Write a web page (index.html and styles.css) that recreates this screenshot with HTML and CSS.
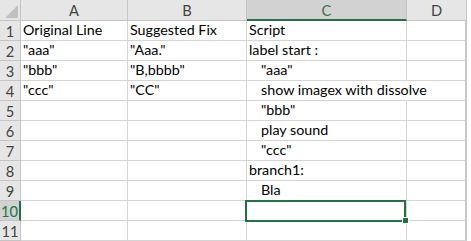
FILE: index.html
```
<!DOCTYPE html>
<html lang="en">
<head>
    <meta charset="UTF-8">
    <meta name="viewport" content="width=device-width, initial-scale=1.0">
    <title>Script Sheet</title>
    <link rel="stylesheet" href="styles.css">
</head>
<body>
    <div class="sheet">
        <div class="corner"></div>
        <div class="col-head">A</div>
        <div class="col-head">B</div>
        <div class="col-head active">C</div>
        <div class="col-head">D</div>

        <div class="row-head">1</div>
        <div class="cell">Original Line</div>
        <div class="cell">Suggested Fix</div>
        <div class="cell">Script</div>
        <div class="cell"></div>

        <div class="row-head">2</div>
        <div class="cell">"aaa"</div>
        <div class="cell">"Aaa."</div>
        <div class="cell">label start :</div>
        <div class="cell"></div>

        <div class="row-head">3</div>
        <div class="cell">"bbb"</div>
        <div class="cell">"B,bbbb"</div>
        <div class="cell indent">"aaa"</div>
        <div class="cell"></div>

        <div class="row-head">4</div>
        <div class="cell">"ccc"</div>
        <div class="cell">"CC"</div>
        <div class="cell indent spill">show imagex with dissolve</div>
        <div class="cell"></div>

        <div class="row-head">5</div>
        <div class="cell"></div>
        <div class="cell"></div>
        <div class="cell indent">"bbb"</div>
        <div class="cell"></div>

        <div class="row-head">6</div>
        <div class="cell"></div>
        <div class="cell"></div>
        <div class="cell indent">play sound</div>
        <div class="cell"></div>

        <div class="row-head">7</div>
        <div class="cell"></div>
        <div class="cell"></div>
        <div class="cell indent">"ccc"</div>
        <div class="cell"></div>

        <div class="row-head">8</div>
        <div class="cell"></div>
        <div class="cell"></div>
        <div class="cell">branch1:</div>
        <div class="cell"></div>

        <div class="row-head">9</div>
        <div class="cell"></div>
        <div class="cell"></div>
        <div class="cell indent">Bla</div>
        <div class="cell"></div>

        <div class="row-head active">10</div>
        <div class="cell"></div>
        <div class="cell"></div>
        <div class="cell selected"></div>
        <div class="cell"></div>

        <div class="row-head">11</div>
        <div class="cell"></div>
        <div class="cell"></div>
        <div class="cell"></div>
        <div class="cell"></div>
    </div>
</body>
</html>
```

FILE: styles.css
```
body {
    margin: 0;
    background-color: #fff;
    font-family: 'Lato', 'Liberation Sans', sans-serif;
    font-size: 14.3px;
    color: #000;
}
.sheet {
    display: grid;
    grid-template-columns: 21px 107px 119px 160px 60px;
    grid-template-rows: 21px repeat(11, 20px);
    width: 467px;
}
.sheet > div {
    box-sizing: border-box;
    border-right: 1px solid #d4d4d4;
    border-bottom: 1px solid #d4d4d4;
    white-space: nowrap;
}
.corner,
.col-head,
.row-head {
    background-color: #e6e6e6;
    color: #444;
    display: flex;
    align-items: center;
    justify-content: center;
    font-size: 14.67px;
}
.sheet > .corner,
.sheet > .col-head,
.sheet > .row-head {
    border-color: #c4c4c4;
}
.sheet > .cell:nth-child(5n) {
    border-right: 2px solid #c8c8c8;
}
.corner {
    position: relative;
}
.corner::after {
    content: '';
    position: absolute;
    right: 2px;
    bottom: 2px;
    border-style: solid;
    border-width: 0 0 13px 13px;
    border-color: transparent transparent #c0c0c0 transparent;
}
.col-head {
    padding-top: 1px;
}
.row-head {
    padding-top: 1px;
}
.sheet > .col-head.active {
    background-color: #d2d2d2;
    color: #3a7350;
    border-bottom: 2px solid #217346;
}
.sheet > .row-head.active {
    background-color: #d2d2d2;
    color: #217346;
    border-right: 2px solid #217346;
}
.cell {
    display: flex;
    align-items: flex-end;
    padding: 0 0 1px 2px;
    line-height: 18px;
}
.indent {
    padding-left: 14px;
}
.sheet > .spill {
    overflow: visible;
    border-right-color: #fff;
    position: relative;
    z-index: 1;
}
.selected {
    position: relative;
}
.selected::before {
    content: '';
    position: absolute;
    left: -2px;
    top: -1px;
    width: 161px;
    height: 22px;
    box-sizing: border-box;
    border: 2px solid #217346;
}
.selected::after {
    content: '';
    position: absolute;
    right: -3px;
    bottom: -4px;
    width: 5px;
    height: 5px;
    background-color: #217346;
    border: 1px solid #fff;
}
```
